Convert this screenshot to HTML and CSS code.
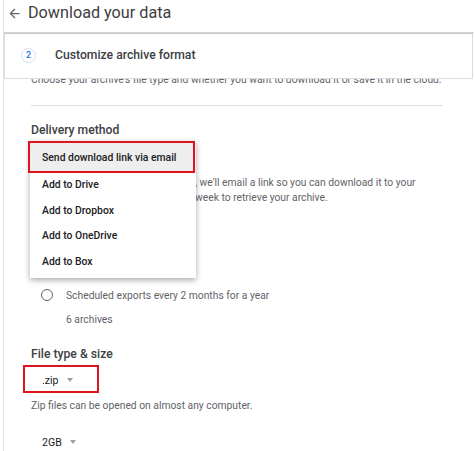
FILE: index.html
```html
<!DOCTYPE html>
<html lang="en">
<head>
    <meta charset="UTF-8">
    <meta name="viewport" content="width=device-width, initial-scale=1.0">
    <title>Download your data</title>
    <link rel="stylesheet" href="styles.css">
</head>
<body>
    <div class="page">
        <header class="top-bar">
            <svg class="back-arrow" width="14" height="14" viewBox="0 0 24 24">
                <path d="M20 11H7.83l5.59-5.59L12 4l-8 8 8 8 1.41-1.41L7.83 13H20v-2z" fill="#5f6368"/>
            </svg>
            <h1>Download your data</h1>
        </header>

        <div class="step-bar">
            <span class="step-num">2</span>
            <span class="step-title">Customize archive format</span>
        </div>

        <div class="content">
            <p class="intro">Choose your archive's file type and whether you want to download it or save it in the cloud.</p>
            <hr class="divider">

            <h2 class="label">Delivery method</h2>
            <div class="delivery">
                <div class="select-value">Send download link via email</div>
                <div class="hint-lines">
                    <div class="hint-line"><span class="hidden-part">When your files are ready</span><span>, we'll email a link so you can download it to your</span></div>
                    <div class="hint-line"><span class="hidden-part">computer. You'll have one </span><span>week to retrieve your archive.</span></div>
                </div>
                <div class="covered"></div>

                <!-- open dropdown menu -->
                <ul class="menu">
                    <li class="selected">Send download link via email</li>
                    <li>Add to Drive</li>
                    <li>Add to Dropbox</li>
                    <li>Add to OneDrive</li>
                    <li>Add to Box</li>
                </ul>
                <div class="mark mark-menu"></div>
            </div>

            <div class="radio-row">
                <span class="radio"></span>
                <div>
                    <div class="radio-text">Scheduled exports every 2 months for a year</div>
                    <div class="radio-sub">6 archives</div>
                </div>
            </div>

            <h2 class="label label-file">File type &amp; size</h2>
            <div class="zip-wrap">
                <div class="dropdown">.zip <span class="caret"></span></div>
                <div class="mark mark-zip"></div>
            </div>
            <p class="hint hint-zip">Zip files can be opened on almost any computer.</p>

            <div class="dropdown size">2GB <span class="caret"></span></div>
        </div>
    </div>
</body>
</html>
```

FILE: styles.css
```css
/* General styles */
body {
    font-family: Roboto, Arial, sans-serif;
    margin: 0;
    padding: 0;
    background: #fff;
    color: #3c4043;
    overflow: hidden;
}

.page {
    width: 470px;
    height: 451px;
    margin-left: 3px;
    border-left: 1px solid #e4e4e4;
    overflow: hidden;
}

/* Header */
.top-bar {
    display: flex;
    align-items: center;
    height: 32px;
    margin-left: -4px;
    padding-left: 7px;
    box-shadow: 0 1px 2px rgba(0, 0, 0, 0.25);
    position: relative;
    z-index: 2;
    background: #fff;
}

.back-arrow {
    width: 15px;
    height: 15px;
    margin-top: -6px;
}

.top-bar h1 {
    margin: 0 0 8px 6px;
    font-size: 16.2px;
    font-weight: 400;
    color: #3c4043;
}

/* Step bar */
.step-bar {
    display: flex;
    align-items: center;
    height: 44px;
    margin: 1px 1px 0 0;
    border: 1px solid #dadce0;
    background: #fff;
    position: relative;
    z-index: 1;
}

.step-num {
    width: 13px;
    height: 13px;
    margin: -2px 0 0 16px;
    border: 1px solid #d2e3fc;
    border-radius: 50%;
    color: #1a73e8;
    font-size: 9px;
    font-weight: 500;
    text-align: center;
    line-height: 13px;
}

.step-title {
    margin: -2px 0 0 19px;
    font-size: 12.2px;
    font-weight: 500;
    color: #3c4043;
}

/* Content */
.content {
    padding-left: 27px;
}

.intro {
    margin: -6px 0 0 0;
    font-size: 10.3px;
    color: #5f6368;
    white-space: nowrap;
}

.divider {
    width: 412px;
    margin: 19px 0 0 0;
    border: none;
    border-top: 1px solid #e0e0e0;
}

.label {
    margin: 17px 0 0 0;
    font-size: 12.2px;
    font-weight: 500;
    color: #3c4043;
}

.delivery {
    position: relative;
}

.select-value {
    margin: 14px 0 0 11px;
    font-size: 10.5px;
    height: 24px;
}

.hint {
    margin: 0;
    font-size: 10.3px;
    line-height: 15px;
    color: #5f6368;
}

.hint-lines {
    font-size: 10.3px;
    line-height: 15px;
    color: #5f6368;
}

.hint-line {
    display: flex;
    white-space: nowrap;
}

.hidden-part {
    width: 164px;
    overflow: hidden;
    text-align: right;
    flex-shrink: 0;
}

.covered {
    height: 84px;
}

.menu {
    position: absolute;
    top: -10px;
    left: -1px;
    width: 166px;
    margin: 0;
    padding: 2px 0 4px;
    list-style: none;
    background: #fff;
    box-shadow: 0 2px 6px rgba(0, 0, 0, 0.35);
}

.menu li {
    height: 25.5px;
    line-height: 25.5px;
    padding-left: 12px;
    font-size: 10.4px;
    font-weight: 500;
    color: #202124;
}

.menu li.selected {
    background: #eeeeee;
    height: 29px;
    line-height: 29px;
}

.mark {
    position: absolute;
    border: 2px solid #e0141e;
}

.mark-menu {
    top: -10px;
    left: -3px;
    width: 163px;
    height: 28px;
}

/* Radio */
.radio-row {
    display: flex;
    margin: 0 0 0 10px;
}

.radio {
    width: 10px;
    height: 10px;
    border: 1.5px solid #5f6368;
    border-radius: 50%;
    flex-shrink: 0;
}

.radio-text {
    margin-left: 13px;
    font-size: 10.3px;
    color: #5f6368;
    line-height: 14px;
}

.radio-sub {
    margin: 10px 0 0 13px;
    font-size: 10.3px;
    color: #5f6368;
    line-height: 14px;
}

.label-file {
    margin-top: 20px;
}

/* Dropdowns */
.zip-wrap {
    position: relative;
    margin-top: 5px;
}

.dropdown {
    display: flex;
    align-items: center;
    gap: 8px;
    height: 28px;
    padding-left: 11px;
    font-size: 10.6px;
    color: #202124;
}

.caret {
    width: 0;
    height: 0;
    border-left: 3.5px solid transparent;
    border-right: 3.5px solid transparent;
    border-top: 4px solid #9aa0a6;
}

.mark-zip {
    top: -1px;
    left: -8px;
    width: 72px;
    height: 24px;
}

.hint-zip {
    margin-top: 4px;
}

.size {
    margin-top: 15px;
}
```
